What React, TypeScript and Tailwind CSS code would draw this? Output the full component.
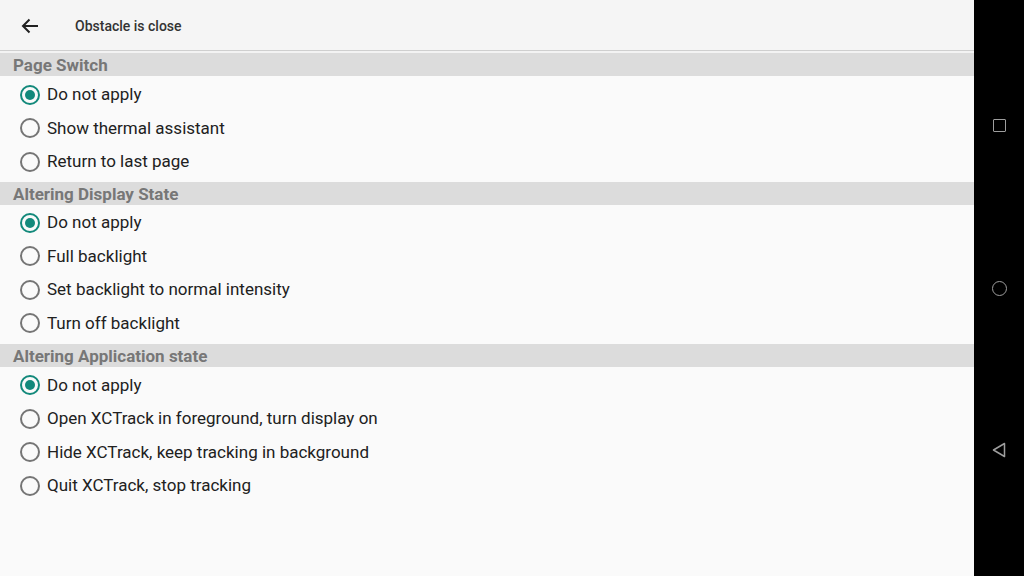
import React from "react";

type Group = { title: string; options: string[] };

const groups: Group[] = [
  { title: "Page Switch", options: ["Do not apply", "Show thermal assistant", "Return to last page"] },
  {
    title: "Altering Display State",
    options: ["Do not apply", "Full backlight", "Set backlight to normal intensity", "Turn off backlight"],
  },
  {
    title: "Altering Application state",
    options: [
      "Do not apply",
      "Open XCTrack in foreground, turn display on",
      "Hide XCTrack, keep tracking in background",
      "Quit XCTrack, stop tracking",
    ],
  },
];

function Radio({ checked }: { checked: boolean }) {
  return (
    <div
      className={
        checked
          ? "w-[20px] h-[20px] rounded-full border-2 border-[#13897b] flex items-center justify-center"
          : "w-[20px] h-[20px] rounded-full border-2 border-[#757575]"
      }
    >
      {checked && <div className="w-[10px] h-[10px] rounded-full bg-[#13897b]" />}
    </div>
  );
}

export default function App() {
  return (
    <div className="w-[1024px] h-[576px] flex overflow-hidden" style={{ fontFamily: "Roboto, 'Noto Sans', sans-serif" }}>
      <div className="w-[974px] h-full flex flex-col bg-[#fafafa]">
        <div className="h-[51px] pt-[2px] bg-[#f5f5f5] border-b border-[#cfcfcf] flex items-center shrink-0">
          <div className="w-[75px] flex items-center pl-[21px]">
            <svg width="18" height="16" viewBox="0 0 18 16" fill="none">
              <path d="M17 8H2M8.5 1.5L2 8l6.5 6.5" stroke="#212121" strokeWidth="2" />
            </svg>
          </div>
          <span className="text-[14px] font-medium text-[#333333]">Obstacle is close</span>
        </div>
        <div className="h-[2px] bg-[#f3f3f3] shrink-0" />
        {groups.map((g, gi) => (
          <div key={g.title} className={gi === 0 ? "pb-[3px]" : "pb-[4px]"}>
            <div className="h-[23px] pt-[2px] bg-[#dcdcdc] flex items-center pl-[13px] text-[17px] font-bold text-[#777777] leading-none">
              {g.title}
            </div>
            <div className={gi === 0 ? "pt-[2px]" : "pt-[1.5px]"}>
              {g.options.map((o, i) => (
                <div key={o} className="h-[33.5px] flex items-center pl-[20px]">
                  <Radio checked={i === 0} />
                  <span className="ml-[7px] text-[17px] text-[#212121]">{o}</span>
                </div>
              ))}
            </div>
          </div>
        ))}
      </div>
      <div className="w-[50px] h-full bg-black flex flex-col items-center pt-[118.5px]">
        <div className="w-[13px] h-[13px] border-[1.5px] border-[#9e9e9e] rounded-[1px]" />
        <div className="mt-[149px] w-[15px] h-[15px] rounded-full border-[1.5px] border-[#9e9e9e]" />
        <svg className="mt-[146.5px]" width="14" height="16" viewBox="0 0 14 16" fill="none">
          <path d="M12.5 1.5L1.5 8l11 6.5z" stroke="#9e9e9e" strokeWidth="1.5" strokeLinejoin="round" />
        </svg>
      </div>
    </div>
  );
}
